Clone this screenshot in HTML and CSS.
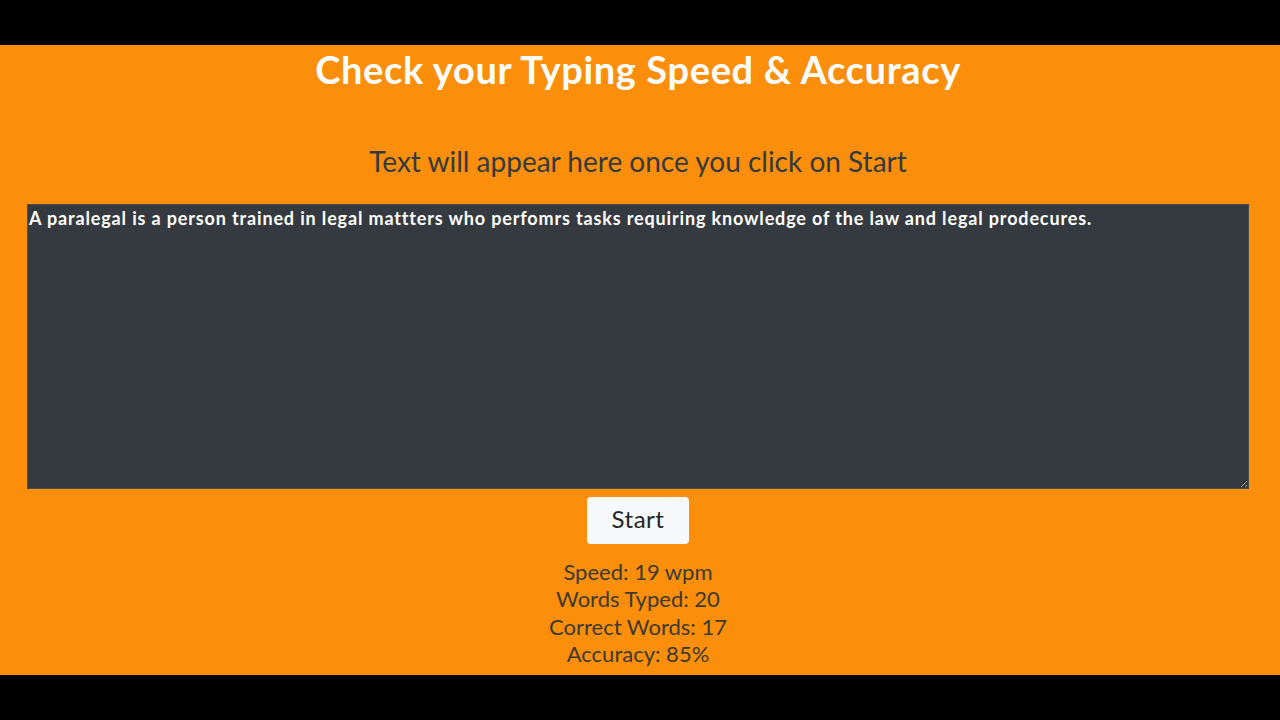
FILE: index.html
```html
<!DOCTYPE html>
<html lang="en">
<head>
<meta charset="utf-8">
<title>Typing Speed</title>
<link rel="stylesheet" href="styles.css">
</head>
<body>
<main class="page">
  <h1 class="title">Check your Typing Speed &amp; Accuracy</h1>
  <p class="prompt">Text will appear here once you click on Start</p>
  <textarea class="typing-area">A paralegal is a person trained in legal mattters who perfomrs tasks requiring knowledge of the law and legal prodecures.</textarea>
  <button class="start-btn" type="button">Start</button>
  <div class="stats">
    <div class="stat">Speed: 19 wpm</div>
    <div class="stat">Words Typed: 20</div>
    <div class="stat">Correct Words: 17</div>
    <div class="stat">Accuracy: 85%</div>
  </div>
</main>
</body>
</html>
```

FILE: styles.css
```css
html, body {
  margin: 0;
  padding: 0;
  background: #000;
}
body {
  padding: 45px 0;
}
.page {
  box-sizing: border-box;
  height: 630px;
  padding-right: 4px;
  background: #fb8e0a;
  display: flex;
  flex-direction: column;
  align-items: center;
  font-family: Lato, "Open Sans", sans-serif;
  overflow: hidden;
}
.title {
  margin: 1px 0 0;
  color: #fff;
  font-size: 38px;
  font-weight: 700;
  letter-spacing: 0.65px;
  line-height: 46px;
}
.prompt {
  margin: 52px 0 0;
  color: #343a40;
  font-size: 28px;
  font-weight: 400;
  line-height: 34px;
}
.typing-area {
  box-sizing: border-box;
  margin: 26px 0 0 27px;
  width: 1222px;
  height: 285px;
  align-self: flex-start;
  background: #353a40;
  color: #fff;
  border: 1px solid #4a4d50;
  padding: 1px 1px;
  font-family: Lato, sans-serif;
  font-size: 18px;
  font-weight: 700;
  letter-spacing: 0.85px;
  line-height: 24px;
  resize: both;
  outline: none;
}
.start-btn {
  box-sizing: border-box;
  margin-top: 8px;
  width: 102px;
  height: 47px;
  border: none;
  border-radius: 4px;
  background: #f8f9fa;
  color: #212529;
  font-family: Lato, sans-serif;
  font-size: 24px;
  font-weight: 400;
  letter-spacing: 0.5px;
  padding: 0 0 5px;
}
.stats {
  margin-top: 14px;
  display: flex;
  flex-direction: column;
  align-items: center;
  color: #3d3a30;
  font-size: 22px;
  line-height: 27.3px;
}
```
